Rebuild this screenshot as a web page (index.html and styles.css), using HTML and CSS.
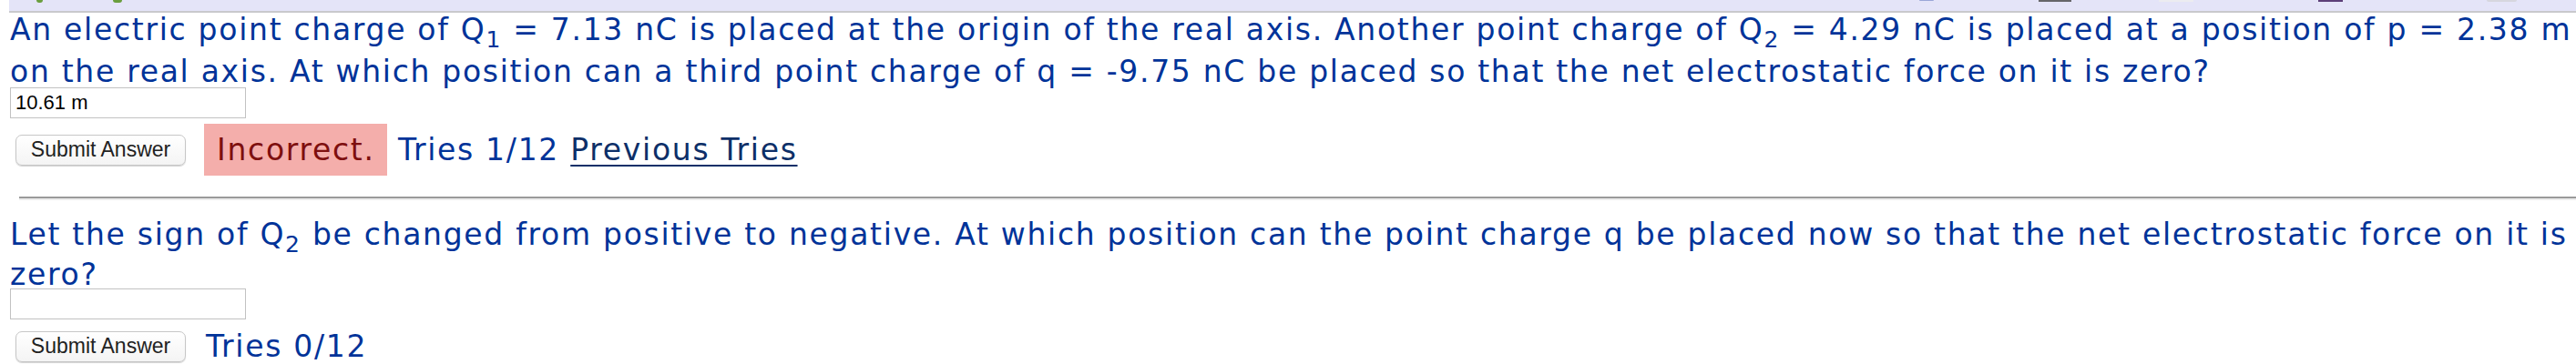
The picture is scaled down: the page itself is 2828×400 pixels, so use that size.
FILE: index.html
```html
<!DOCTYPE html>
<html>
<head>
<meta charset="utf-8">
<link rel="stylesheet" href="styles.css">
</head>
<body>
<div class="toolbar">
  <span class="ic ic-g1"></span>
  <span class="ic ic-g2"></span>
  <span class="ic ic-blue"></span>
  <span class="ic ic-dark"></span>
  <span class="ic ic-light"></span>
  <span class="ic ic-purple"></span>
  <span class="ic ic-light2"></span>
</div>
<div class="page">
  <div class="part part1">
    <p class="q">An electric point charge of Q<sub>1</sub> = 7.13 nC is placed at the origin of the real axis. Another point charge of Q<sub>2</sub> = 4.29 nC is placed at a position of p = 2.38 m on the real axis. At which position can a third point charge of q = -9.75 nC be placed so that the net electrostatic force on it is zero?</p>
    <input class="ans" type="text" value="10.61 m">
    <div class="row">
      <button class="submit">Submit Answer</button>
      <span class="status"><span class="incorrect">Incorrect.</span> <span class="tries">Tries 1/12</span> <a class="prev" href="#">Previous Tries</a></span>
    </div>
  </div>
  <hr class="sep">
  <div class="part part2">
    <p class="q">Let the sign of Q<sub>2</sub> be changed from positive to negative. At which position can the point charge q be placed now so that the net electrostatic force on it is zero?</p>
    <input class="ans" type="text" value="">
    <div class="row">
      <button class="submit">Submit Answer</button>
      <span class="status"><span class="tries">Tries 0/12</span></span>
    </div>
  </div>
</div>
</body>
</html>
```
FILE: styles.css
```css
html, body {
  margin: 0;
  padding: 0;
  background: #ffffff;
}
body {
  position: relative;
  font-family: "DejaVu Sans", Verdana, sans-serif;
  color: #003399;
}
.toolbar {
  position: absolute;
  top: 0;
  left: 10px;
  right: 0;
  height: 12px;
  background: #e4e4f8;
  border-bottom: 2px solid #c9c9cc;
  display: flex;
  align-items: flex-start;
}
.ic { display: block; height: 2px; }
.ic-g1 { margin-left: 30px; width: 7px; height: 3px; background: #6a9e3e; border-radius: 0 0 4px 4px; }
.ic-g2 { margin-left: 77px; width: 10px; height: 3px; background: #6a9e3e; border-radius: 0 0 5px 5px; }
.ic-blue { margin-left: 1973px; width: 16px; height: 1px; background: #9aa6d8; border-radius: 0 0 8px 8px; }
.ic-dark { margin-left: 115px; width: 36px; background: #66666a; }
.ic-light { margin-left: 96px; width: 38px; background: #ececf0; }
.ic-purple { margin-left: 137px; width: 27px; background: #5c3f78; }
.ic-light2 { margin-left: 158px; width: 33px; background: #d6d6de; border-radius: 0 0 16px 16px; }

.page {
  padding: 13px 0 0 11px;
}
.q {
  margin: 0;
  font-size: 33px;
  line-height: 39px;
  letter-spacing: 1.7px;
}
.q sub {
  font-size: 25px;
  line-height: 31px;
  vertical-align: -8px;
}
.part2 .q sub {
  line-height: 27px;
}
.ans {
  display: block;
  box-sizing: border-box;
  width: 259px;
  height: 34px;
  margin: -2px 0 0 0;
  padding: 0 5px;
  border: 1px solid #c2c2c2;
  border-radius: 0;
  background: #fff;
  font-family: "Liberation Sans", Arial, sans-serif;
  font-size: 22px;
  color: #000;
  outline: none;
}
.part2 .ans {
  margin-top: -4px;
}
.row {
  display: flex;
  align-items: center;
  margin-top: 6px;
}
.part2 .row {
  margin-top: 10px;
}
.submit {
  box-sizing: border-box;
  width: 187px;
  height: 34px;
  margin: 0 0 0 6px;
  padding: 0;
  border: 1px solid #c6c6c6;
  border-radius: 7px;
  background: linear-gradient(#ffffff, #f4f4f4);
  box-shadow: 0 1px 1px rgba(0,0,0,0.18);
  font-family: "Liberation Sans", Arial, sans-serif;
  font-size: 23px;
  color: #222;
}
.status {
  margin-left: 20px;
  font-size: 33px;
  line-height: 39px;
  letter-spacing: 1.7px;
  white-space: nowrap;
}
.part2 .status { margin-left: 22px; }
.incorrect {
  display: inline-block;
  height: 57px;
  line-height: 57px;
  padding: 0 13px 0 14px;
  background: #f4aeab;
  color: #7e0f0f;
}
.prev {
  color: #0d2f68;
  text-decoration: underline;
  text-decoration-thickness: 2px;
  text-underline-offset: 5px;
}
.sep {
  margin: 23px 0 18px 10px;
  height: 0;
  border: 0;
  border-top: 2px solid #9a9a9a;
  border-bottom: 2px solid #ececec;
}
```
